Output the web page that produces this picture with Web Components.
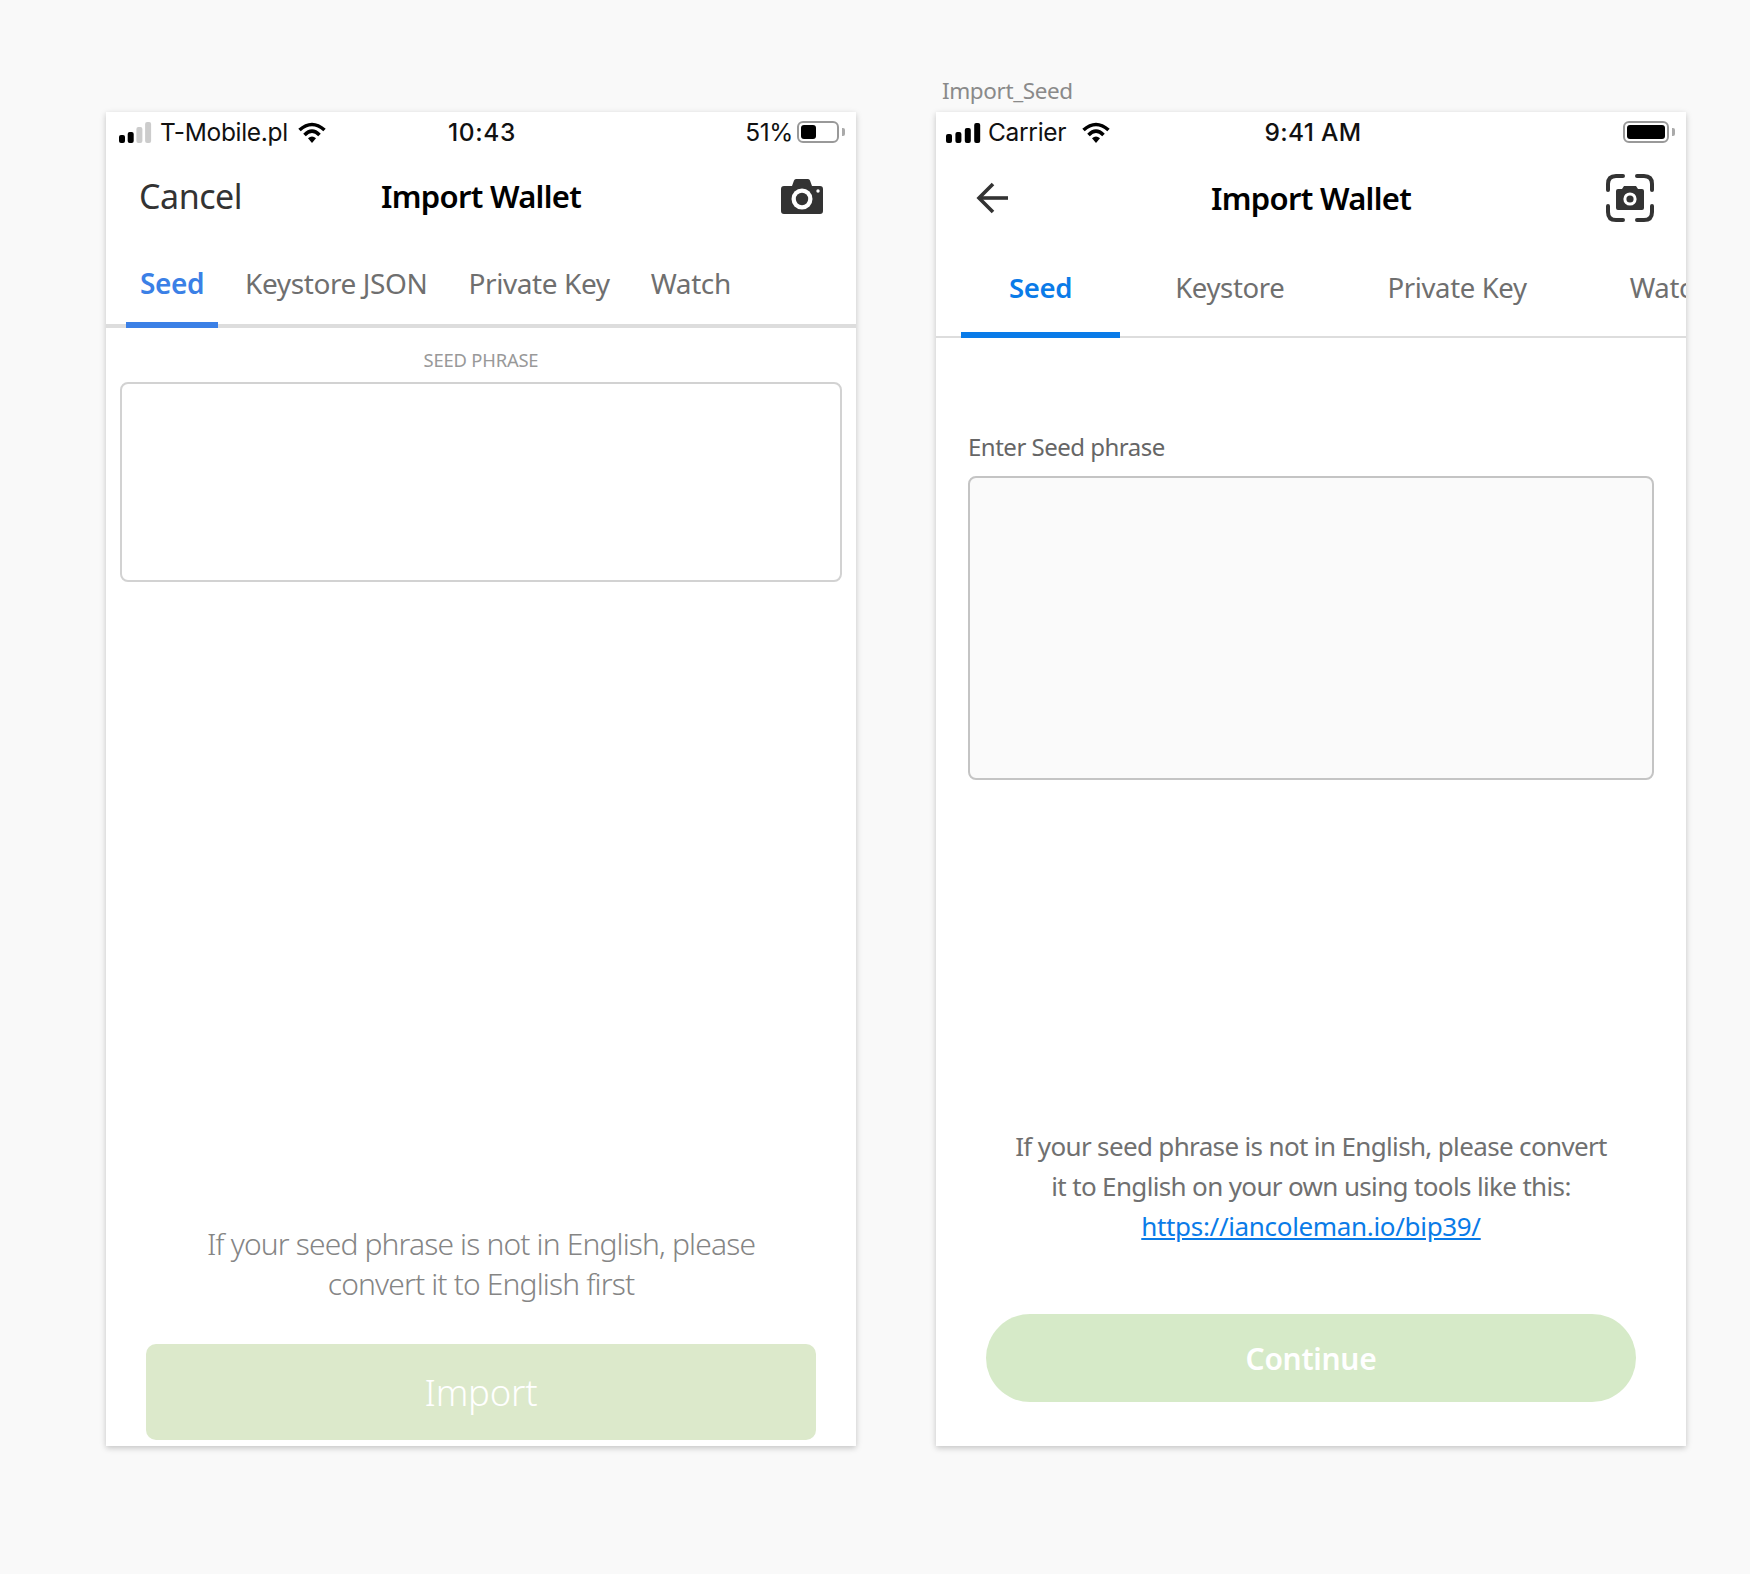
<!DOCTYPE html>
<html>
<head>
<meta charset="utf-8">
<title>Import Wallet</title>
<style>
  body { margin: 0; background: #f9f9f9; font-family: "Noto Sans", sans-serif; }
  .page {
    display: grid;
    grid-template-columns: 750px 750px;
    grid-template-rows: 34px 1334px;
    column-gap: 80px;
    padding: 78px 0 128px 106px;
  }
  .frame-label { grid-column: 2; font-size: 22.5px; line-height: 26px; color: #8a8a8a; padding-left: 6px; letter-spacing: -0.4px; }
  .first { grid-column: 1; grid-row: 2; }
  .second { grid-column: 2; grid-row: 2; }
</style>
</head>
<body>
<div class="page">
  <div class="frame-label">Import_Seed</div>

  <wallet-screen class="first">
    <status-bar slot="status" carrier="T-Mobile.pl" time="10:43" percent="51%" bars="2" level="0.45"></status-bar>
    <nav-header slot="nav" label="Cancel" icon="camera" title="Import Wallet"></nav-header>
    <tab-strip slot="tabs" style="--tab-pad:14px;--tab-gap:13px;--tab-left:20px;--tab-h:88px;--tab-text:86px;--tab-size:28px;--tab-ls:-0.4px;--accent:#3b80e6;--rule:4px;--bar:6px">
      <tab-item active>Seed</tab-item>
      <tab-item>Keystore JSON</tab-item>
      <tab-item>Private Key</tab-item>
      <tab-item>Watch</tab-item>
    </tab-strip>
    <seed-field slot="field" caption="SEED PHRASE" mode="center"></seed-field>
    <hint-text slot="hint" style="--hint-size:30px;--hint-weight:300;--hint-color:#858585;--hint-ls:-0.85px;--hint-bottom:40px">If your seed phrase is not in English, please<br>convert it to English first</hint-text>
    <action-button slot="action" mode="flat">Import</action-button>
  </wallet-screen>

  <wallet-screen class="second">
    <status-bar slot="status" carrier="Carrier" time="9:41 AM" bars="4" level="1"></status-bar>
    <nav-header slot="nav" icon="scan" back title="Import Wallet"></nav-header>
    <tab-strip slot="tabs" style="--tab-pad:48px;--tab-gap:7px;--tab-left:25px;--tab-h:94px;--tab-text:88px;--tab-size:27.5px;--tab-ls:-0.35px;--accent:#0a7be8;--rule:2px;--bar:6px">
      <tab-item active>Seed</tab-item>
      <tab-item>Keystore</tab-item>
      <tab-item>Private Key</tab-item>
      <tab-item>Watch</tab-item>
    </tab-strip>
    <seed-field slot="field" caption="Enter Seed phrase" mode="left"></seed-field>
    <hint-text slot="hint" style="--hint-size:26px;--hint-weight:400;--hint-color:#707070;--hint-ls:-0.65px;--hint-bottom:68px">If your seed phrase is not in English, please convert<br>it to English on your own using tools like this:<br><a href="#">https://iancoleman.io/bip39/</a></hint-text>
    <action-button slot="action" mode="pill">Continue</action-button>
  </wallet-screen>
</div>

<script>
// one phone screen, the parts come in through slots
class WalletScreen extends HTMLElement {
  constructor() {
    super();
    const shadow = this.attachShadow({ mode: "open" });
    shadow.innerHTML = `
      <style>
        :host { display: flex; flex-direction: column; width: 750px; height: 1334px; background: #fff; box-shadow: 0 2px 6px rgba(0,0,0,.22); overflow: hidden; }
        .grow { flex: 1; }
      </style>
      <slot name="status"></slot>
      <slot name="nav"></slot>
      <slot name="tabs"></slot>
      <slot name="field"></slot>
      <div class="grow"></div>
      <slot name="hint"></slot>
      <slot name="action"></slot>`;
  }
}

class StatusBar extends HTMLElement {
  constructor() {
    super();
    this.attachShadow({ mode: "open" });
  }
  connectedCallback() {
    const bars = Number(this.getAttribute("bars"));
    const level = Number(this.getAttribute("level"));
    const percent = this.getAttribute("percent");
    const full = bars === 4;
    const heights = full ? [9, 11, 15, 20] : [8, 11, 16, 21];
    const signal = heights.map((h, i) => {
      const x = i * (full ? 9.4 : 8.7);
      const color = i < bars ? "#000" : "#ccc";
      return `<rect x="${x}" y="${21 - h}" width="6" height="${h}" rx="2" fill="${color}"/>`;
    }).join("");
    this.shadowRoot.innerHTML = `
      <style>
        :host { display: grid; grid-template-columns: 1fr auto 1fr; align-items: center; height: 40px; padding: 0 11px 0 ${full ? 10 : 13}px; font-family: Inter, sans-serif; font-size: 24.5px; color: #111; }
        .left, .right { display: flex; align-items: center; }
        .left svg { display: block; }
        .carrier { margin-left: ${full ? 6 : 5}px; letter-spacing: -0.3px; }
        .wifi { margin-left: ${full ? 15 : 9}px; }
        .time { font-weight: 500; letter-spacing: ${full ? 0.3 : 0.6}px; margin-left: ${full ? 5 : 0}px; }
        .right { justify-content: flex-end; }
        .percent { margin-right: 4px; letter-spacing: -0.4px; }
        .battery { box-sizing: border-box; width: ${full ? 46 : 42}px; height: 22px; border: 2px solid #999; border-radius: 6px; padding: 2px; }
        .battery i { display: block; height: 100%; width: ${level * 100}%; background: #000; border-radius: 3px; }
        .tip { width: 3px; height: 8px; margin-left: 3px; background: #aaa; border-radius: 0 2px 2px 0; }
      </style>
      <div class="left">
        <svg width="36" height="21" viewBox="0 0 36 21">${signal}</svg>
        <span class="carrier">${this.getAttribute("carrier")}</span>
        <svg class="wifi" width="30" height="21" viewBox="0 0 29 21">
          <path d="M2 8Q14.5-3 27 8" fill="none" stroke="#000" stroke-width="3.6"/>
          <path d="M7 13Q14.5 5.5 22 13" fill="none" stroke="#000" stroke-width="3.6"/>
          <path d="M10.5 16.2Q14.5 13 18.5 16.2L14.5 21Z" fill="#000"/>
        </svg>
      </div>
      <div class="time">${this.getAttribute("time")}</div>
      <div class="right">
        ${percent ? `<span class="percent">${percent}</span>` : ""}
        <div class="battery"><i></i></div><div class="tip"></div>
      </div>`;
  }
}

const icons = {
  camera: `<svg width="42" height="35" viewBox="0 0 42 35">
    <path d="M3 7H11L13 1.5Q13.5 0 15 0H27Q28.5 0 29 1.5L31 7H39Q42 7 42 10V32Q42 35 39 35H3Q0 35 0 32V10Q0 7 3 7Z" fill="#333"/>
    <circle cx="21" cy="20" r="10.5" fill="#fff"/><circle cx="21" cy="20" r="6.2" fill="#333"/>
    <circle cx="37" cy="12" r="1.7" fill="#fff"/></svg>`,
  scan: `<svg width="48" height="48" viewBox="0 0 48 48" fill="none">
    <g stroke="#333" stroke-width="4" stroke-linecap="round">
      <path d="M2 16V10Q2 2 10 2H17"/><path d="M31 2H38Q46 2 46 10V16"/>
      <path d="M46 32V38Q46 46 38 46H31"/><path d="M17 46H10Q2 46 2 38V32"/>
    </g>
    <path d="M12 15H16L18 12H30L32 15H36Q38 15 38 17V34Q38 36 36 36H12Q10 36 10 34V17Q10 15 12 15Z" fill="#333"/>
    <circle cx="24" cy="25" r="6.6" fill="#fff"/><circle cx="24" cy="25" r="3.6" fill="#333"/></svg>`
};

class NavHeader extends HTMLElement {
  constructor() {
    super();
    this.attachShadow({ mode: "open" });
  }
  connectedCallback() {
    const back = this.hasAttribute("back");
    const label = this.getAttribute("label");
    const lead = back
      ? `<svg class="back" width="32" height="32" viewBox="0 0 32 32" fill="none" stroke="#333" stroke-width="3.6"><path d="M32 16H3"/><path d="M17 2L3 16L17 30"/></svg>`
      : `<span class="cancel">${label}</span>`;
    this.shadowRoot.innerHTML = `
      <style>
        :host { display: grid; grid-template-columns: 1fr auto 1fr; align-items: center; height: ${back ? 92 : 88}px; padding: 0 ${back ? 32 : 33}px; }
        .lead { display: flex; align-items: center; }
        .back { margin-left: 8px; }
        .cancel { font-size: 34px; color: #333; letter-spacing: -0.45px; }
        .title { font-size: 31px; font-weight: 600; color: #000; letter-spacing: -0.7px; }
        .icon { display: flex; justify-content: flex-end; }
        svg { display: block; }
      </style>
      <div class="lead">${lead}</div>
      <div class="title">${this.getAttribute("title")}</div>
      <div class="icon">${icons[this.getAttribute("icon")]}</div>`;
  }
}

class TabStrip extends HTMLElement {
  constructor() {
    super();
    const shadow = this.attachShadow({ mode: "open" });
    shadow.innerHTML = `
      <style>
        :host { display: block; height: var(--tab-h); background: linear-gradient(#ddd, #ddd) bottom / 100% var(--rule) no-repeat; overflow: hidden; }
        .row { display: flex; gap: var(--tab-gap); padding-left: var(--tab-left); height: 100%; white-space: nowrap; }
      </style>
      <div class="row"><slot></slot></div>`;
  }
}

class TabItem extends HTMLElement {
  constructor() {
    super();
    const shadow = this.attachShadow({ mode: "open" });
    shadow.innerHTML = `
      <style>
        :host { display: block; position: relative; flex: none; height: 100%; padding: 0 var(--tab-pad); font-size: var(--tab-size); line-height: var(--tab-text); color: #6f6f6f; letter-spacing: var(--tab-ls); }
        :host([active]) { color: var(--accent); font-weight: 600; }
        :host([active])::after { content: ""; position: absolute; left: 0; right: 0; bottom: 0; height: var(--bar); background: var(--accent); }
      </style>
      <slot></slot>`;
  }
}

class SeedField extends HTMLElement {
  constructor() {
    super();
    this.attachShadow({ mode: "open" });
  }
  connectedCallback() {
    const left = this.getAttribute("mode") === "left";
    this.shadowRoot.innerHTML = `
      <style>
        :host { display: block; padding: ${left ? "0 32px 0 32px" : "0 14px"}; }
        .cap { text-align: ${left ? "left" : "center"}; color: ${left ? "#666" : "#999"}; font-size: ${left ? 24 : 18.4}px; letter-spacing: ${left ? -0.5 : -0.2}px;
          padding-top: ${left ? 90 : 20}px; line-height: ${left ? 38 : 24}px; height: ${left ? 48 : 34}px; }
        .box { box-sizing: border-box; height: ${left ? 304 : 200}px; border: 2px solid ${left ? "#c4c4c4" : "#d2d2d2"}; border-radius: 8px; background: ${left ? "#fafafa" : "#fff"}; }
      </style>
      <div class="cap">${this.getAttribute("caption")}</div>
      <div class="box"></div>`;
  }
}

class HintText extends HTMLElement {
  constructor() {
    super();
    const shadow = this.attachShadow({ mode: "open" });
    shadow.innerHTML = `
      <style>
        :host { display: block; text-align: center; font-size: var(--hint-size); font-weight: var(--hint-weight); color: var(--hint-color); letter-spacing: var(--hint-ls); line-height: 40px; padding-bottom: var(--hint-bottom, 39px); }
        ::slotted(a) { color: #0a7be8; letter-spacing: -0.33px; }
      </style>
      <slot></slot>`;
  }
}

class ActionButton extends HTMLElement {
  constructor() {
    super();
    this.attachShadow({ mode: "open" });
  }
  connectedCallback() {
    const pill = this.getAttribute("mode") === "pill";
    this.shadowRoot.innerHTML = `
      <style>
        :host { display: block; padding: ${pill ? "0 50px 44px" : "0 40px 6px"}; }
        .btn { display: flex; align-items: center; justify-content: center; height: ${pill ? 88 : 96}px; border-radius: ${pill ? 44 : 10}px; background: ${pill ? "#d6eac8" : "#dce9cb"}; color: #fff;
          font-size: ${pill ? 30 : 36.5}px; font-weight: ${pill ? 600 : 300}; letter-spacing: ${pill ? -0.3 : -0.2}px; }
      </style>
      <div class="btn"><slot></slot></div>`;
  }
}

customElements.define("wallet-screen", WalletScreen);
customElements.define("status-bar", StatusBar);
customElements.define("nav-header", NavHeader);
customElements.define("tab-strip", TabStrip);
customElements.define("tab-item", TabItem);
customElements.define("seed-field", SeedField);
customElements.define("hint-text", HintText);
customElements.define("action-button", ActionButton);
</script>
</body>
</html>
